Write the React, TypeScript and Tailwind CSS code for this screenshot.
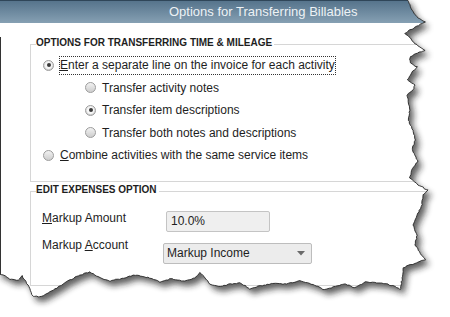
import React from "react";

// torn paper outline, traced from the screenshot (right side, then bottom going left)
const EDGE: [number, number][] = [
  [406, -2], [410, 5], [412, 10], [417, 17], [425, 22], [415, 27], [405, 33], [410, 38],
  [415, 44], [425, 50], [417, 53], [410, 57], [410, 63], [417, 67], [412, 73], [407, 80],
  [415, 85], [413, 90], [407, 95], [408, 100], [410, 110], [408, 120], [413, 130], [415, 140],
  [412, 150], [415, 155], [418, 162], [412, 168], [410, 178], [418, 185], [428, 190], [423, 195],
  [422, 205], [417, 215], [413, 225], [417, 235], [415, 245], [422, 255], [425, 260], [418, 262],
  [403, 268], [402, 280], [400, 290], [395, 286], [380, 283], [365, 282], [355, 288], [345, 284],
  [335, 286], [325, 290], [315, 285], [300, 281], [285, 284], [275, 283], [260, 286], [250, 289],
  [240, 283], [230, 284], [220, 287], [210, 284], [205, 278], [200, 272], [195, 278], [185, 281],
  [170, 279], [160, 282], [150, 278], [135, 275], [120, 279], [110, 281], [100, 278], [90, 272],
  [80, 275], [70, 280], [60, 286], [50, 292], [40, 297], [33, 296], [28, 285], [22, 276],
  [18, 280], [10, 279], [5, 276], [-2, 273],
];

function jagged(pts: [number, number][]) {
  let seed = 11;
  const rnd = () => {
    seed = (seed * 16807) % 2147483647;
    return seed / 2147483647 - 0.5;
  };
  const out: string[] = [];
  for (let i = 0; i < pts.length - 1; i++) {
    const [ax, ay] = pts[i];
    const [bx, by] = pts[i + 1];
    const n = Math.max(1, Math.round(Math.hypot(bx - ax, by - ay) / 2));
    for (let k = 0; k < n; k++) {
      const t = k / n;
      const j = i === 0 && k === 0 ? 0 : 1.1;
      out.push(`${(ax + (bx - ax) * t + rnd() * j).toFixed(1)},${(ay + (by - ay) * t + rnd() * j).toFixed(1)}`);
    }
  }
  const last = pts[pts.length - 1];
  out.push(`${last[0]},${last[1]}`);
  return out;
}

const EDGE_PTS = jagged(EDGE);
const EDGE_D = "M" + EDGE_PTS.join(" L");
const PAPER_D = "M-2,-2 L" + EDGE_PTS.join(" L") + " Z";
const OUTSIDE_D = "M-20,-20 H470 V340 H-20 Z " + PAPER_D;

function TornEdge() {
  return (
    <svg className="pointer-events-none absolute inset-0" width="450" height="317" viewBox="0 0 450 317">
      <defs>
        <clipPath id="outside">
          <path d={OUTSIDE_D} clipRule="evenodd" />
        </clipPath>
        <filter id="soft" x="-10%" y="-10%" width="130%" height="130%">
          <feGaussianBlur stdDeviation="3" />
        </filter>
      </defs>
      <path d={OUTSIDE_D} fill="#ffffff" fillRule="evenodd" />
      <g clipPath="url(#outside)">
        <path d={PAPER_D} fill="#1f1f1f" opacity="0.7" transform="translate(4,5)" filter="url(#soft)" />
      </g>
      <path d={EDGE_D} fill="none" stroke="#262626" strokeWidth="0.9" />
    </svg>
  );
}

function Radio({ checked = false }: { checked?: boolean }) {
  return (
    <span className="flex h-[11px] w-[11px] shrink-0 items-center justify-center rounded-full border border-[#9c9c9c] bg-linear-to-b from-[#f2f2f2] to-[#cdcdcd]">
      {checked && (
        <span className="flex h-[7px] w-[7px] items-center justify-center rounded-full bg-[#f7f7f7]">
          <span className="h-[4px] w-[4px] rounded-full bg-[#3a3a3a]" />
        </span>
      )}
    </span>
  );
}

function Legend({ children }: { children: React.ReactNode }) {
  return (
    <legend className="ml-[5px] pr-[2px] pb-[3px] text-[10px] leading-[12px] font-bold text-[#1e1e1e]">
      {children}
    </legend>
  );
}

export default function App() {
  return (
    <div className="relative h-[317px] w-[450px] overflow-hidden bg-white font-['Liberation_Sans',Arial,sans-serif] text-[12px] text-[#1e1e1e]">
      {/* Title bar */}
      <div className="h-[23px] border-t border-[#2f4659] bg-linear-to-b from-[#56748c] to-[#86a0b3] pl-[169px] text-[13px] leading-[22px] text-[#edf2f5]">
        Options for Transferring Billables
      </div>

      {/* Dialog body */}
      <div className="h-[294px] border-l border-[#333333]">
        <fieldset className="mt-[14px] ml-[29px] w-[480px] border border-r-0 border-[#d6d6d6] pt-[2px] pb-[14px]">
          <Legend>OPTIONS FOR TRANSFERRING TIME &amp; MILEAGE</Legend>
          <div className="flex h-[22.5px] items-center pl-[12px]">
            <Radio checked />
            <span className="ml-[5px] border border-dotted border-[#333333] leading-[17px]">
              <span className="underline">E</span>nter a separate line on the invoice for each activity
            </span>
          </div>
          <div className="flex h-[22.5px] items-center pl-[54px]">
            <Radio />
            <span className="ml-[6px]">Transfer activity notes</span>
          </div>
          <div className="flex h-[22.5px] items-center pl-[54px]">
            <Radio checked />
            <span className="ml-[6px]">Transfer item descriptions</span>
          </div>
          <div className="flex h-[22.5px] items-center pl-[54px]">
            <Radio />
            <span className="ml-[6px]">Transfer both notes and descriptions</span>
          </div>
          <div className="flex h-[22.5px] items-center pl-[12px]">
            <Radio />
            <span className="ml-[6px]">
              <span className="underline">C</span>ombine activities with the same service items
            </span>
          </div>
        </fieldset>

        <fieldset className="mt-[2px] ml-[29px] w-[480px] border border-r-0 border-[#d6d6d6] pt-[12.5px] pb-[21px]">
          <Legend>EDIT EXPENSES OPTION</Legend>
          <div className="flex items-start pl-[11px]">
            <span className="w-[124px] leading-[14px]">
              <span className="underline">M</span>arkup Amount
            </span>
            <div className="h-[21px] w-[104px] rounded-[2px] border border-[#c4c4c4] bg-[#efefef] pl-[4px] leading-[19px]">
              10.0%
            </div>
          </div>
          <div className="mt-[11px] flex items-start pl-[11px]">
            <span className="-mt-[5px] w-[121px] leading-[14px]">
              Markup <span className="underline">A</span>ccount
            </span>
            <div className="flex h-[21px] w-[149px] items-center justify-between rounded-[2px] border border-[#bdbdbd] bg-[#ececec] pr-[6px] pl-[3px] leading-[19px]">
              <span>Markup Income</span>
              <svg width="8" height="5" viewBox="0 0 8 5">
                <path d="M0 0 H8 L4 4.5 Z" fill="#6a6a6a" />
              </svg>
            </div>
          </div>
        </fieldset>
      </div>

      <TornEdge />
    </div>
  );
}
